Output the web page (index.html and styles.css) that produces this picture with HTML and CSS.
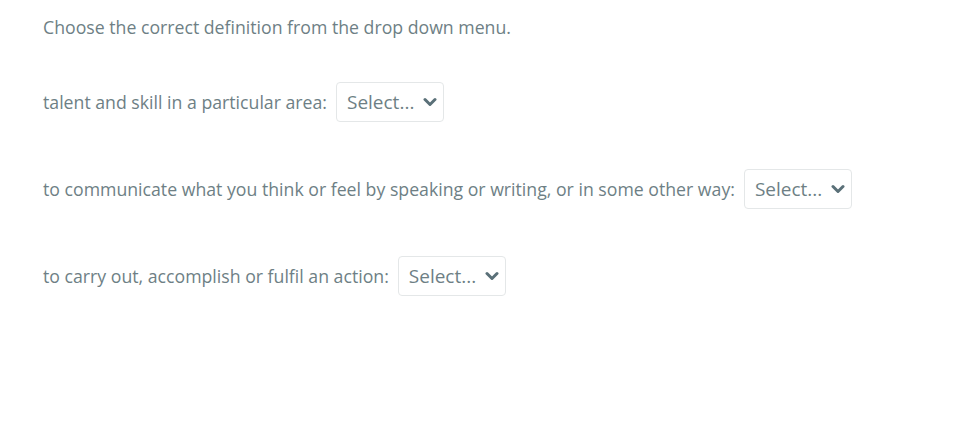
FILE: index.html
```html
<!DOCTYPE html>
<html lang="en">
<head>
<meta charset="utf-8">
<title>Definitions</title>
<link rel="stylesheet" href="styles.css">
</head>
<body>
<main class="quiz">
  <p class="instructions">Choose the correct definition from the drop down menu.</p>
  <div class="rows">
    <div class="row">
      <span class="label">talent and skill in a particular area:</span>
      <div class="select"><span class="select-text">Select...</span>
        <svg class="chev" viewBox="0 0 14 10" width="14" height="10"><path d="M2 2.5 L7 7.5 L12 2.5" fill="none" stroke="currentColor" stroke-width="3" stroke-linecap="round" stroke-linejoin="round"/></svg>
      </div>
    </div>
    <div class="row">
      <span class="label">to communicate what you think or feel by speaking or writing, or in some other way:</span>
      <div class="select"><span class="select-text">Select...</span>
        <svg class="chev" viewBox="0 0 14 10" width="14" height="10"><path d="M2 2.5 L7 7.5 L12 2.5" fill="none" stroke="currentColor" stroke-width="3" stroke-linecap="round" stroke-linejoin="round"/></svg>
      </div>
    </div>
    <div class="row">
      <span class="label">to carry out, accomplish or fulfil an action:</span>
      <div class="select"><span class="select-text">Select...</span>
        <svg class="chev" viewBox="0 0 14 10" width="14" height="10"><path d="M2 2.5 L7 7.5 L12 2.5" fill="none" stroke="currentColor" stroke-width="3" stroke-linecap="round" stroke-linejoin="round"/></svg>
      </div>
    </div>
  </div>
</main>
</body>
</html>
```
FILE: styles.css
```css
html, body {
  margin: 0;
  padding: 0;
  background: #ffffff;
}
body {
  font-family: "Open Sans", "Liberation Sans", sans-serif;
  font-size: 17.7px;
  color: #6e7f85;
}
.quiz {
  padding: 14px 0 0 43px;
}
.instructions {
  margin: 0;
  height: 26px;
  line-height: 26px;
}
.rows {
  display: flex;
  flex-direction: column;
  gap: 47px;
  margin-top: 42px;
}
.row {
  display: flex;
  align-items: center;
  gap: 9px;
  height: 40px;
}
.select {
  display: flex;
  align-items: center;
  justify-content: space-between;
  box-sizing: border-box;
  width: 108px;
  height: 40px;
  padding: 0 6px 0 10px;
  border: 1px solid #e4e7e8;
  border-radius: 4px;
}
.select-text {
  font-size: 19px;
}
.chev {
  color: #5a7078;
}
```
